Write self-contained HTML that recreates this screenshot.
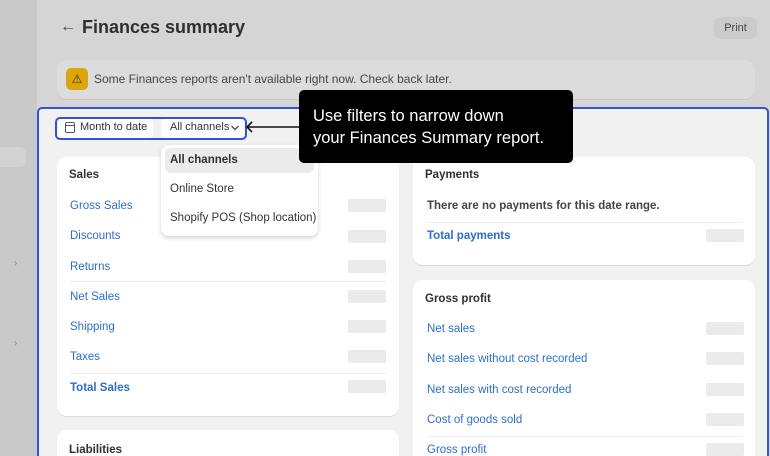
<!DOCTYPE html>
<html style="width:770px;height:456px;overflow:hidden"><head><meta charset="utf-8"><style>
*{box-sizing:border-box;margin:0;padding:0}
body{width:770px;height:456px;overflow:hidden;background:#d5d5d5;font-family:"Liberation Sans",sans-serif;position:relative;color:#303030}
.a{position:absolute}
.card{position:absolute;background:#fff;border-radius:10px;box-shadow:0 1px 0 #dcdcdc}
.t{position:absolute;font-size:11.5px;white-space:nowrap}
.h{font-weight:bold;color:#303030}
.l{color:#2c6ecb}
.bar{position:absolute;width:38px;height:13px;background:#ebebeb;border-radius:2px}
.sep{position:absolute;height:1px;background:#eeeeee}
</style></head><body>
<div class="a" style="left:0;top:0;width:37px;height:456px;background:#c9c9c9"></div>
<div class="a" style="left:0;top:147px;width:26px;height:20px;background:#d2d2d2;border-radius:0 6px 6px 0"></div>
<div class="t" style="left:14px;top:258px;color:#888;font-size:10px">›</div>
<div class="t" style="left:14px;top:338px;color:#888;font-size:10px">›</div>
<div class="t" style="left:60px;top:18px;font-size:16px;color:#444">←</div>
<div class="t" style="left:82px;top:17px;font-size:18px;font-weight:bold;color:#2f2f2f">Finances summary</div>
<div class="a" style="left:714px;top:17px;width:43px;height:22px;background:#cbcbcb;border-radius:7px;font-size:11px;color:#444;text-align:center;line-height:22px">Print</div>
<div class="a" style="left:57px;top:60px;width:698px;height:39px;background:#dcdcdc;border-radius:10px;box-shadow:0 1px 0 #c8c8c8"></div>
<div class="a" style="left:66px;top:68px;width:22px;height:22px;background:#dba60c;border-radius:5px;text-align:center;font-size:12px;line-height:22px;color:#333">⚠</div>
<div class="t" style="left:94px;top:72px;font-size:12px;color:#444">Some Finances reports aren't available right now. Check back later.</div>

<div class="a" style="left:37px;top:107px;width:732px;height:360px;background:#f1f1f1;border:2px solid #2f55d4;border-radius:5px;overflow:hidden">
</div>

<div class="a" style="left:55px;top:117px;width:192px;height:23px;border:2px solid #2f55d4;border-radius:5px;background:#f1f1f1"></div>
<div class="a" style="left:58px;top:119px;width:95px;height:19px;background:#fff;border-radius:4px"></div>
<div class="a" style="left:161px;top:119px;width:83px;height:19px;background:#fff;border-radius:4px"></div>
<div class="a" style="left:65px;top:122px;width:10px;height:11px;border:1.3px solid #555;border-radius:2px"></div>
<div class="a" style="left:65px;top:125px;width:10px;height:1.3px;background:#555"></div>
<div class="t" style="left:80px;top:121px;color:#333;font-size:11px">Month to date</div>
<div class="t" style="left:170px;top:121px;color:#333;font-size:11px">All channels</div>
<svg class="a" style="left:230px;top:124px" width="10" height="8"><path d="M1.5 2l3.5 3.5 3.5-3.5" fill="none" stroke="#444" stroke-width="1.3"/></svg>
<svg class="a" style="left:245px;top:120px" width="56" height="14"><path d="M2 7H56M7 2L2 7l5 5" fill="none" stroke="#111" stroke-width="1.6"/></svg>

<div class="card" style="left:57px;top:157px;width:342px;height:259px"></div>
<div class="t h" style="left:69px;top:169px">Sales</div>
<div class="t l" style="left:70px;top:200px">Gross Sales</div>
<div class="t l" style="left:70px;top:230px">Discounts</div>
<div class="t l" style="left:70px;top:261px">Returns</div>
<div class="sep" style="left:70px;top:281px;width:316px"></div>
<div class="t l" style="left:70px;top:291px">Net Sales</div>
<div class="t l" style="left:70px;top:321px">Shipping</div>
<div class="t l" style="left:70px;top:351px">Taxes</div>
<div class="sep" style="left:70px;top:373px;width:316px"></div>
<div class="t l" style="left:70px;top:382px;font-weight:bold">Total Sales</div>
<div class="bar" style="left:348px;top:199px"></div>
<div class="bar" style="left:348px;top:230px"></div>
<div class="bar" style="left:348px;top:260px"></div>
<div class="bar" style="left:348px;top:290px"></div>
<div class="bar" style="left:348px;top:320px"></div>
<div class="bar" style="left:348px;top:350px"></div>
<div class="bar" style="left:348px;top:380px"></div>

<div class="card" style="left:57px;top:430px;width:342px;height:26px;border-radius:10px 10px 0 0"></div>
<div class="t h" style="left:69px;top:444px">Liabilities</div>

<div class="card" style="left:413px;top:157px;width:342px;height:108px"></div>
<div class="t h" style="left:425px;top:169px">Payments</div>
<div class="t h" style="left:427px;top:200px;color:#444">There are no payments for this date range.</div>
<div class="sep" style="left:427px;top:222px;width:316px"></div>
<div class="t l" style="left:427px;top:230px;font-weight:bold">Total payments</div>
<div class="bar" style="left:706px;top:229px"></div>

<div class="card" style="left:413px;top:280px;width:342px;height:176px;border-radius:10px 10px 0 0"></div>
<div class="t h" style="left:425px;top:293px">Gross profit</div>
<div class="t l" style="left:427px;top:323px">Net sales</div>
<div class="t l" style="left:427px;top:353px">Net sales without cost recorded</div>
<div class="t l" style="left:427px;top:384px">Net sales with cost recorded</div>
<div class="t l" style="left:427px;top:414px">Cost of goods sold</div>
<div class="sep" style="left:427px;top:436px;width:316px"></div>
<div class="t l" style="left:427px;top:444px">Gross profit</div>
<div class="bar" style="left:706px;top:322px"></div>
<div class="bar" style="left:706px;top:352px"></div>
<div class="bar" style="left:706px;top:383px"></div>
<div class="bar" style="left:706px;top:413px"></div>
<div class="bar" style="left:706px;top:443px"></div>

<div class="a" style="left:161px;top:145px;width:157px;height:91px;background:#fff;border-radius:8px;box-shadow:0 2px 5px rgba(0,0,0,.18)"></div>
<div class="a" style="left:165px;top:148px;width:149px;height:25px;background:#ebebeb;border-radius:6px"></div>
<div class="t h" style="left:170px;top:154px">All channels</div>
<div class="t" style="left:170px;top:183px;color:#333">Online Store</div>
<div class="t" style="left:170px;top:212px;color:#333">Shopify POS (Shop location)</div>

<div class="a" style="left:299px;top:90px;width:274px;height:73px;background:#000;border-radius:5px"></div>
<div class="t" style="left:313px;top:105px;color:#fff;font-size:16.5px;line-height:22px">Use filters to narrow down<br>your Finances Summary report.</div>
</body></html>
